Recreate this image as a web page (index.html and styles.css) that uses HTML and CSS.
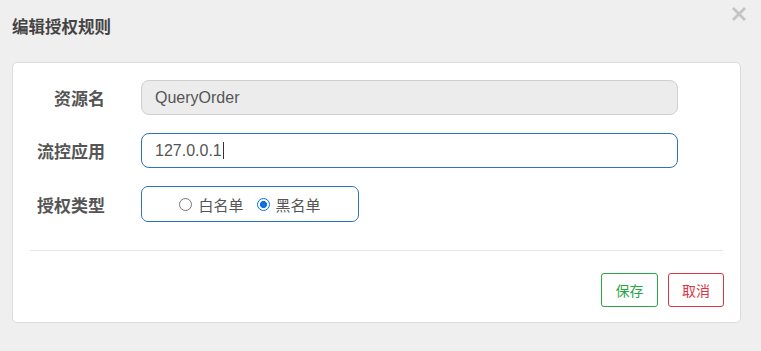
FILE: index.html
```html
<!DOCTYPE html>
<html lang="zh">
<head>
<meta charset="utf-8">
<title>编辑授权规则</title>
<link rel="stylesheet" href="styles.css">
</head>
<body>
<div class="dialog">
  <div class="dialog-header">
    <h3 class="dialog-title">编辑授权规则</h3>
    <svg class="close" width="14" height="14" viewBox="0 0 14 14"><path d="M2 2 L12 12 M12 2 L2 12" stroke="#c4c4c4" stroke-width="2.8" stroke-linecap="square"/></svg>
  </div>
  <div class="card">
    <div class="form">
      <div class="label">资源名</div>
      <div class="input disabled">QueryOrder</div>
      <div class="label">流控应用</div>
      <div class="input focused">127.0.0.1<span class="caret"></span></div>
      <div class="label">授权类型</div>
      <div class="radio-box">
        <span class="radio"></span><span class="radio-text">白名单</span>
        <span class="radio checked"></span><span class="radio-text">黑名单</span>
      </div>
    </div>
    <div class="divider"></div>
    <div class="actions">
      <button class="btn btn-save">保存</button>
      <button class="btn btn-cancel">取消</button>
    </div>
  </div>
</div>
</body>
</html>
```

FILE: styles.css
```css
html, body {
  margin: 0;
  padding: 0;
  background: #efefef;
  font-family: "Liberation Sans", "Noto Sans CJK SC", sans-serif;
}
.dialog {
  width: 761px;
  height: 351px;
  box-sizing: border-box;
  padding: 0 20px 0 12px;
}
.dialog-header {
  height: 62px;
  display: flex;
  align-items: flex-start;
  justify-content: space-between;
}
.dialog-title {
  margin: 15px 0 0 0;
  font-size: 16.5px;
  font-weight: bold;
  color: #444;
  font-family: "Noto Sans CJK SC", sans-serif;
  line-height: 22px;
}
.close {
  margin-top: 7px;
  margin-right: -5px;
}
.card {
  width: 729px;
  height: 261px;
  box-sizing: border-box;
  background: #fff;
  border: 1px solid #dcdcdc;
  border-radius: 5px;
  padding: 17px 16px 0 0;
}
.form {
  display: grid;
  grid-template-columns: 92px 537px;
  column-gap: 36px;
  row-gap: 18px;
  align-items: center;
}
.label {
  text-align: right;
  font-family: "Noto Sans CJK SC", sans-serif;
  font-weight: bold;
  font-size: 17px;
  color: #555;
}
.input {
  height: 35px;
  box-sizing: border-box;
  border: 1px solid #ccc;
  border-radius: 8px;
  padding: 0 13px;
  display: flex;
  align-items: center;
  font-size: 16px;
  color: #555;
}
.input.disabled {
  background: #ececec;
  border-color: #cfcfcf;
}
.input.focused {
  border-color: #2f72b8;
}
.caret {
  display: inline-block;
  width: 1px;
  height: 17px;
  background: #333;
  margin-left: 1px;
}
.radio-box {
  width: 218px;
  height: 36px;
  box-sizing: border-box;
  border: 1px solid #2f72b8;
  border-radius: 7px;
  display: flex;
  align-items: center;
  justify-content: center;
  font-family: "Noto Sans CJK SC", sans-serif;
  font-size: 15px;
  color: #555;
}
.radio {
  width: 13px;
  height: 13px;
  box-sizing: border-box;
  border: 1px solid #777;
  border-radius: 50%;
  margin-right: 6px;
  background: #fff;
}
.radio.checked {
  border: 1.5px solid #0b6fe6;
  background: radial-gradient(circle, #0b6fe6 0 3.3px, #fff 3.8px);
}
.radio-text {
  margin-right: 13px;
}
.radio-text:last-child {
  margin-right: 0;
}
.divider {
  height: 1px;
  background: #e5e5e5;
  margin: 28px 0 0 17px;
  width: 693px;
}
.actions {
  display: flex;
  justify-content: flex-end;
  gap: 10px;
  margin-top: 22px;
}
.btn {
  width: 57px;
  height: 34px;
  box-sizing: border-box;
  background: #fff;
  border: 1px solid;
  border-radius: 3px;
  font-family: "Noto Sans CJK SC", sans-serif;
  font-size: 14px;
  padding: 0;
}
.btn-save {
  color: #28a745;
  border-color: #28a745;
}
.btn-cancel {
  width: 56px;
  color: #dc3545;
  border-color: #dc3545;
}
```
